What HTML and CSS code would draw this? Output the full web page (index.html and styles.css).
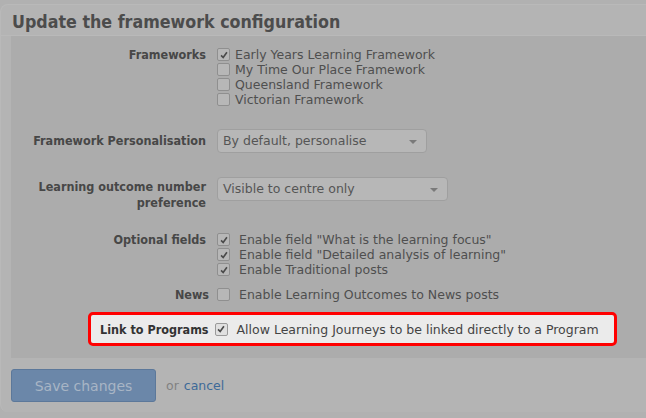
FILE: index.html
```html
<!DOCTYPE html>
<html>
<head>
<meta charset="utf-8">
<link rel="stylesheet" href="styles.css">
</head>
<body>
<div class="modal">
  <h1 class="title">Update the framework configuration</h1>
  <div class="form">
    <div class="row row-fw">
      <div class="label">Frameworks</div>
      <div class="ctrl">
        <div class="opt"><span class="cb on"><svg viewBox="0 0 12 12"><path d="M2.5 6.5 L5 9 L9.5 2.8" /></svg></span>Early Years Learning Framework</div>
        <div class="opt"><span class="cb"></span>My Time Our Place Framework</div>
        <div class="opt"><span class="cb"></span>Queensland Framework</div>
        <div class="opt"><span class="cb"></span>Victorian Framework</div>
      </div>
    </div>
    <div class="row row-pers">
      <div class="label label-sel">Framework Personalisation</div>
      <div class="ctrl"><div class="select sel-pers">By default, personalise<span class="caret"></span></div></div>
    </div>
    <div class="row row-lo">
      <div class="label label-sel2">Learning outcome number<br>preference</div>
      <div class="ctrl"><div class="select sel-lo">Visible to centre only<span class="caret"></span></div></div>
    </div>
    <div class="row row-opt">
      <div class="label">Optional fields</div>
      <div class="ctrl">
        <div class="opt wide"><span class="cb on"><svg viewBox="0 0 12 12"><path d="M2.5 6.5 L5 9 L9.5 2.8" /></svg></span>Enable field "What is the learning focus"</div>
        <div class="opt wide"><span class="cb on"><svg viewBox="0 0 12 12"><path d="M2.5 6.5 L5 9 L9.5 2.8" /></svg></span>Enable field "Detailed analysis of learning"</div>
        <div class="opt wide"><span class="cb on"><svg viewBox="0 0 12 12"><path d="M2.5 6.5 L5 9 L9.5 2.8" /></svg></span>Enable Traditional posts</div>
      </div>
    </div>
    <div class="row row-news">
      <div class="label label-news">News</div>
      <div class="ctrl">
        <div class="opt wide"><span class="cb"></span>Enable Learning Outcomes to News posts</div>
      </div>
    </div>
    <div class="highlight">
      <span class="hl-label">Link to Programs</span>
      <span class="cb on hl-cb"><svg viewBox="0 0 12 12"><path d="M2.5 6.5 L5 9 L9.5 2.8" /></svg></span>
      <span class="hl-text">Allow Learning Journeys to be linked directly to a Program</span>
    </div>
  </div>
  <div class="actions">
    <span class="btn">Save changes</span>
    <span class="or">or</span>
    <a class="cancel" href="#">cancel</a>
  </div>
</div>
</body>
</html>
```
FILE: styles.css
```css
html, body {
  margin: 0;
  padding: 0;
}
body {
  background: #b1b1b1;
  font-family: "DejaVu Sans", Verdana, sans-serif;
  font-size: 12.5px;
  color: #4f4f4f;
  width: 646px;
  height: 418px;
  overflow: hidden;
}
.modal {
  margin-top: 4px;
  width: 680px;
  height: 408px;
  background: #b4b4b4;
  border-top: 1px solid #b9b9b9;
  border-left: 1px solid #b9b9b9;
  border-radius: 8px;
  box-sizing: border-box;
}
.title {
  margin: 0;
  padding: 6px 0 0 11px;
  height: 24px;
  font-family: "DejaVu Sans Condensed", "DejaVu Sans", sans-serif;
  font-size: 17.7px;
  font-weight: bold;
  color: #4c4c4c;
  line-height: 22px;
  border-bottom: 1px solid #b9b9b9;
}
.form {
  margin-left: 10px;
  background: #acacac;
  padding: 11px 0 11px 0;
  height: 300px;
}
.row {
  display: flex;
  align-items: flex-start;
}
.label {
  width: 195px;
  text-align: right;
  font-family: "DejaVu Sans Condensed", "DejaVu Sans", sans-serif;
  font-weight: bold;
  color: #474747;
  line-height: 15px;
  flex: none;
  white-space: nowrap;
}
.ctrl {
  margin-left: 11px;
}
.opt {
  display: flex;
  align-items: center;
  line-height: 15px;
  height: 15px;
  white-space: nowrap;
}
.cb {
  width: 11px;
  height: 11px;
  border: 1px solid #8f8f8f;
  border-radius: 2px;
  background: #b7b7b7;
  margin-right: 5px;
  flex: none;
  display: inline-flex;
  align-items: center;
  justify-content: center;
}
.opt.wide .cb {
  margin-right: 9px;
}
.cb svg {
  width: 10px;
  height: 10px;
  fill: none;
  stroke: #4a4a4a;
  stroke-width: 2;
}
.row-fw { margin-bottom: 22px; }
.row-pers { margin-bottom: 24px; }
.row-lo { margin-bottom: 21px; }
.row-opt { margin-bottom: 10px; }
.row-news { margin-bottom: 10px; }
.label-sel { padding-top: 4px; }
.label-sel2 { padding-top: 2px; line-height: 16px; }
.label-news { width: 198px; }
.row-news .ctrl { margin-left: 8px; }
.select {
  position: relative;
  height: 22px;
  line-height: 22px;
  border: 1px solid #9f9f9f;
  border-radius: 4px;
  background: #b7b7b7;
  padding-left: 5px;
  color: #555;
  box-sizing: content-box;
}
.sel-pers { width: 203px; }
.sel-lo { width: 224px; }
.caret {
  position: absolute;
  right: 9px;
  top: 10px;
  width: 0;
  height: 0;
  border-left: 4px solid transparent;
  border-right: 4px solid transparent;
  border-top: 4px solid #7a7a7a;
}
.highlight {
  margin-left: 77px;
  width: 529px;
  height: 34px;
  box-sizing: border-box;
  border: 3px solid #ff0000;
  border-radius: 5px;
  background: #ebebeb;
  display: flex;
  align-items: center;
  padding-left: 9px;
  white-space: nowrap;
}
.hl-label {
  font-family: "DejaVu Sans Condensed", "DejaVu Sans", sans-serif;
  font-weight: bold;
  color: #333;
}
.hl-cb {
  margin-left: 6px;
  margin-right: 9px;
  background: #e0e0e0;
  border-color: #9a9a9a;
}
.hl-text {
  color: #444;
}
.actions {
  display: flex;
  align-items: center;
  padding: 11px 0 0 10px;
}
.btn {
  width: 143px;
  height: 31px;
  border: 1px solid #5c789a;
  border-radius: 3px;
  background: #6b87a9;
  color: #a8b5c5;
  font-size: 14px;
  display: inline-flex;
  align-items: center;
  justify-content: center;
}
.or {
  margin-left: 10px;
  color: #818181;
}
.cancel {
  margin-left: 5px;
  color: #3e6a98;
  text-decoration: none;
}
```
